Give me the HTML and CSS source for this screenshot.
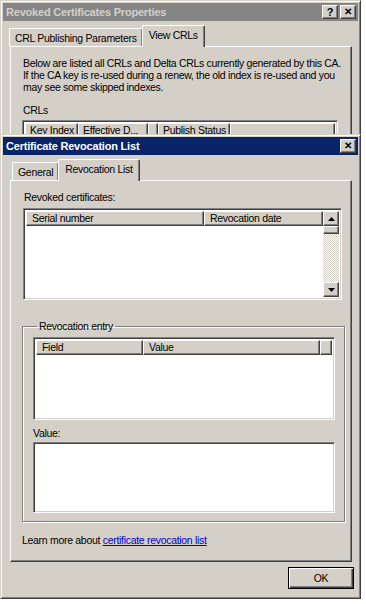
FILE: index.html
```html
<!DOCTYPE html>
<html>
<head>
<meta charset="utf-8">
<link rel="stylesheet" href="styles.css">
</head>
<body>
<div class="screen">
  <div class="win back">
    <div class="titlebar inactive">
      <span class="title">Revoked Certificates Properties</span>
      <span class="tbtns"><span class="tbtn">?</span><span class="tbtn x">✕</span></span>
    </div>
    <div class="tabs back-tabs">
      <span class="tab">CRL Publishing Parameters</span>
      <span class="tab sel">View CRLs</span>
    </div>
    <div class="panel back-panel">
      <p class="desc">Below are listed all CRLs and Delta CRLs currently generated by this CA.<br>If the CA key is re-used during a renew, the old index is re-used and you<br>may see some skipped indexes.</p>
      <p class="lbl crls">CRLs</p>
      <div class="lv back-lv">
        <div class="hdr">
          <span class="hc" style="width:53px">Key Index</span>
          <span class="hc" style="width:70px">Effective D...</span>
          <span class="hc" style="width:9px"></span>
          <span class="hc" style="width:72px">Publish Status</span>
          <span class="hc fill"></span>
        </div>
      </div>
    </div>
  </div>

  <div class="win front">
    <div class="titlebar active">
      <span class="title">Certificate Revocation List</span>
      <span class="tbtns"><span class="tbtn x">✕</span></span>
    </div>
    <div class="tabs front-tabs">
      <span class="tab">General</span>
      <span class="tab sel">Revocation List</span>
    </div>
    <div class="panel front-panel">
      <p class="lbl rc">Revoked certificates:</p>
      <div class="lv list1">
        <div class="lvmain">
          <div class="hdr">
            <span class="hc" style="width:178px">Serial number</span>
            <span class="hc fill">Revocation date</span>
          </div>
          <div class="lvbody"></div>
        </div>
        <div class="vscroll">
          <span class="sbtn"><svg width="7" height="4" viewBox="0 0 7 4"><path d="M3.5 0 L7 4 L0 4 Z" fill="#000"/></svg></span>
          <span class="thumb"></span>
          <span class="track"></span>
          <span class="sbtn"><svg width="7" height="4" viewBox="0 0 7 4"><path d="M0 0 L7 0 L3.5 4 Z" fill="#000"/></svg></span>
        </div>
      </div>
      <fieldset class="group">
        <legend>Revocation entry</legend>
        <div class="lv list2">
          <div class="hdr">
            <span class="hc" style="width:107px">Field</span>
            <span class="hc" style="width:177px">Value</span>
            <span class="hc fill"></span>
          </div>
          <div class="lvbody"></div>
        </div>
        <p class="lbl val">Value:</p>
        <div class="textbox"></div>
      </fieldset>
      <p class="learn">Learn more about <a href="#">certificate revocation list</a></p>
    </div>
    <div class="footer">
      <button class="ok">OK</button>
    </div>
  </div>
</div>
</body>
</html>
```

FILE: styles.css
```css
* { box-sizing: border-box; }
html, body { margin: 0; padding: 0; background: #fff; }
.screen {
  position: relative;
  width: 366px;
  height: 604px;
  overflow: hidden;
  font-family: "Liberation Sans", Arial, sans-serif;
  font-size: 10.5px;
  letter-spacing: -0.3px;
  line-height: 12px;
  color: #000;
}
p { margin: 0; }

.win {
  background: #d4d0c8;
  border-top: 1px solid #d4d0c8;
  border-left: 1px solid #d4d0c8;
  border-right: 1px solid #404040;
  border-bottom: 1px solid #404040;
  box-shadow: inset 1px 1px 0 #fff, inset -1px -1px 0 #808080;
  padding: 2px;
}
.back {
  width: 361px;
  height: 180px;
}
.front {
  position: absolute;
  left: 0;
  top: 134px;
  width: 361px;
  height: 465px;
  display: flex;
  flex-direction: column;
}

.titlebar {
  height: 18px;
  display: flex;
  align-items: center;
  justify-content: space-between;
  padding: 0 2px 0 3px;
  font-weight: bold;
  font-size: 11px;
  letter-spacing: -0.2px;
}
.inactive { background: #858585; color: #d4d0c8; }
.active { background: #0a246a; color: #fff; }
.tbtns { display: flex; gap: 2px; }
.tbtn {
  width: 16px; height: 14px;
  background: #d4d0c8;
  color: #000;
  font-size: 11px;
  font-weight: bold;
  letter-spacing: 0;
  display: flex; align-items: center; justify-content: center;
  border-top: 1px solid #fff; border-left: 1px solid #fff;
  border-right: 1px solid #404040; border-bottom: 1px solid #404040;
  box-shadow: inset -1px -1px 0 #808080;
  line-height: 1;
}
.tbtn.x { font-size: 10px; }

.tabs {
  display: flex;
  align-items: flex-end;
  margin-top: 4px;
  height: 21px;
}
.back-tabs { padding-left: 6px; }
.front-tabs { padding-left: 9px; }
.tab {
  height: 18px;
  padding: 0 5px;
  display: flex;
  align-items: center;
  background: #d4d0c8;
  border-top: 1px solid #fff;
  border-left: 1px solid #fff;
  border-right: 1px solid #404040;
  box-shadow: inset -1px 0 0 #808080;
  border-radius: 2px 2px 0 0;
}
.tab.sel {
  height: 22px;
  margin-left: -1px;
  padding: 3px 6px 0 6px;
  position: relative;
  top: 1px;
  z-index: 1;
  align-items: flex-start;
}

.panel {
  margin: 0 6px 0 7px;
  border-top: 1px solid #fff;
  border-left: 1px solid #fff;
  border-right: 1px solid #404040;
  border-bottom: 1px solid #404040;
  box-shadow: inset -1px -1px 0 #808080;
}
.back-panel {
  height: 140px;
  padding: 10px 0 0 12px;
}
.desc { white-space: nowrap; letter-spacing: -0.32px; }
.crls { margin-top: 11px; }
.lv {
  background: #fff;
  border-top: 1px solid #808080;
  border-left: 1px solid #808080;
  border-right: 1px solid #fff;
  border-bottom: 1px solid #fff;
  box-shadow: inset 1px 1px 0 #404040, inset -1px -1px 0 #d4d0c8;
  padding: 2px;
}
.back-lv { margin-top: 4px; width: 316px; height: 40px; margin-left: -1px; }
.back-lv .hc { padding: 0 4px; }
.hdr { display: flex; height: 15px; }
.hc {
  background: #d4d0c8;
  border-top: 1px solid #fff;
  border-left: 1px solid #fff;
  border-right: 1px solid #404040;
  border-bottom: 1px solid #404040;
  box-shadow: inset -1px -1px 0 #808080;
  padding: 0 5px;
  line-height: 12px;
  white-space: nowrap;
  overflow: hidden;
}
.hc.fill { flex: 1; }

.front-panel {
  flex: 1;
  padding: 8px 9px 0 12px;
  display: flex;
  flex-direction: column;
}
.rc { margin-top: 2px; margin-left: 1px; }
.list1 {
  margin-top: 5px;
  height: 92px;
  display: flex;
  padding: 2px;
}
.lvmain { flex: 1; display: flex; flex-direction: column; }
.lvbody { flex: 1; background: #fff; }
.vscroll {
  width: 16px;
  display: flex;
  flex-direction: column;
}
.sbtn {
  height: 15px;
  background: #d4d0c8;
  border-top: 1px solid #fff; border-left: 1px solid #fff;
  border-right: 1px solid #404040; border-bottom: 1px solid #404040;
  box-shadow: inset -1px -1px 0 #808080;
  display: flex; align-items: center; justify-content: center;
}
.thumb {
  height: 8px;
  background: #d4d0c8;
  border-top: 1px solid #fff; border-left: 1px solid #fff;
  border-right: 1px solid #404040; border-bottom: 1px solid #404040;
  box-shadow: inset -1px -1px 0 #808080;
}
.track {
  flex: 1;
  background-color: #fff;
  background-image: repeating-conic-gradient(#d4d0c8 0 25%, #fff 0 50%);
  background-size: 2px 2px;
}

.group {
  margin: 20px 0 0 -1px;
  padding: 5px 9px 0 10px;
  height: 202px;
  border: 1px solid #808080;
  box-shadow: 1px 1px 0 #fff, inset 1px 1px 0 #fff;
  width: 321px;
}
.group legend {
  padding: 0 2px;
  margin-left: 4px;
  line-height: 12px;
}
.list2 { height: 83px; display: flex; flex-direction: column; }
.val { margin-top: 7px; }
.textbox {
  margin-top: 3px;
  height: 71px;
  background: #fff;
  border-top: 1px solid #808080;
  border-left: 1px solid #808080;
  border-right: 1px solid #fff;
  border-bottom: 1px solid #fff;
  box-shadow: inset 1px 1px 0 #404040, inset -1px -1px 0 #d4d0c8;
}
.learn { margin-top: 12px; margin-left: -1px; }
.learn a { color: #0000cc; text-decoration: underline; }

.footer {
  height: 34px;
  display: flex;
  justify-content: flex-end;
  align-items: flex-start;
  padding: 5px 4px 0 0;
}
.ok {
  width: 66px;
  height: 22px;
  background: #d4d0c8;
  font-family: "Liberation Sans", Arial, sans-serif;
  font-size: 10.5px;
  letter-spacing: -0.3px;
  color: #000;
  border: 1px solid #000;
  box-shadow: inset 1px 1px 0 #fff, inset -1px -1px 0 #404040, inset -2px -2px 0 #808080;
  padding: 0;
}
```
